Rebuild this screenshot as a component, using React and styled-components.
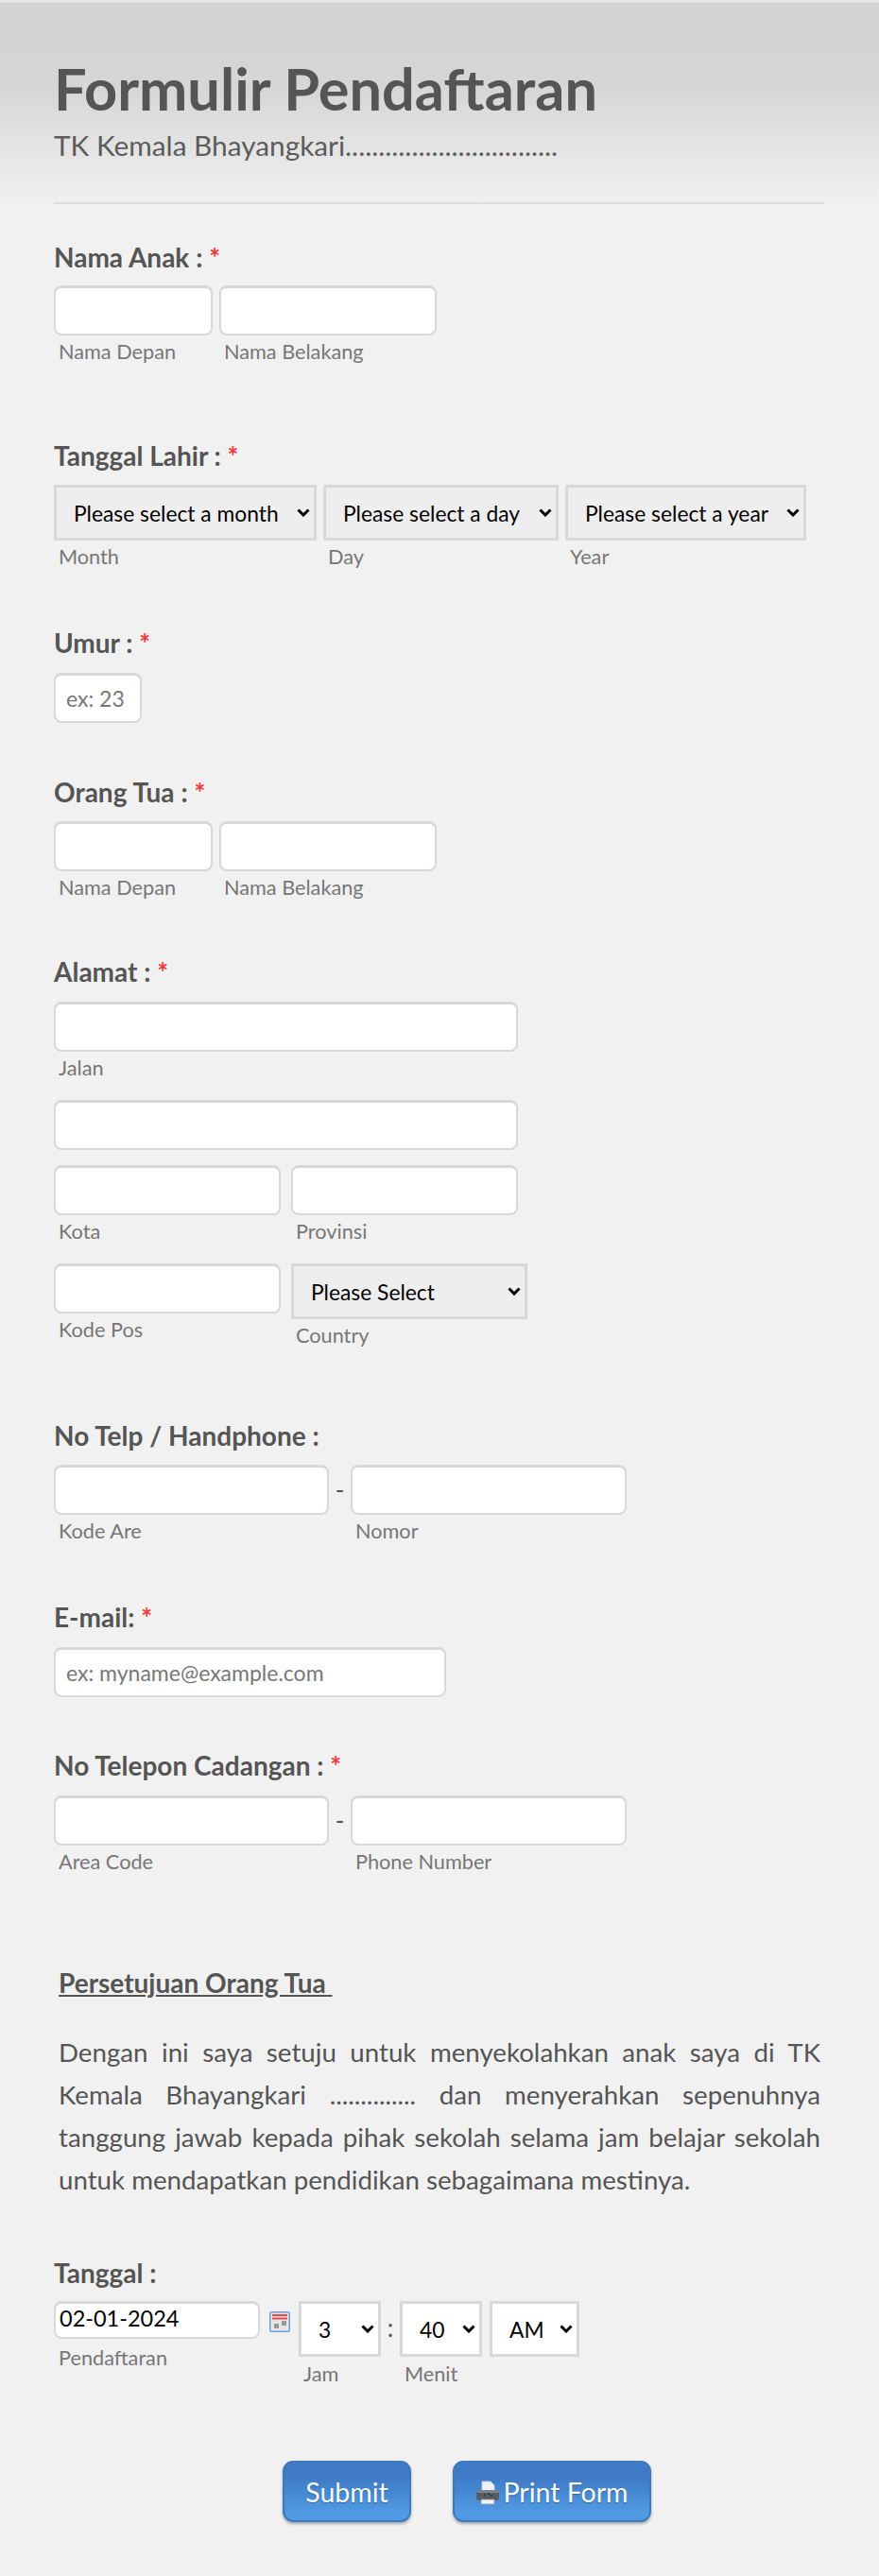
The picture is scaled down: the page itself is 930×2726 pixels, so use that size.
import React from "react";
import styled, { createGlobalStyle } from "styled-components";

const chevron = `url("data:image/svg+xml,%3Csvg xmlns='http://www.w3.org/2000/svg' width='14' height='9' viewBox='0 0 14 9'%3E%3Cpath d='M1.5 1.5 7 7l5.5-5.5' fill='none' stroke='%23000' stroke-width='3'/%3E%3C/svg%3E")`;

const GlobalStyle = createGlobalStyle`
  html, body { margin: 0; padding: 0; background: #f1f1f1; }
  * { box-sizing: border-box; }
`;

const Page = styled.div`
  width: 930px;
  height: 2726px;
  overflow: hidden;
  font-family: Lato, "Liberation Sans", sans-serif;
  color: #555;
  background: linear-gradient(to bottom, #d2d2d2 0, #d6d6d6 90px, #f1f1f1 216px);
  border-top: 3px solid #e4e4e4;
  padding: 0 57px;
`;

const Header = styled.div`
  height: 213px;
  border-bottom: 2px solid #dcdcdc;
  padding-top: 55px;
  margin-right: 1px;
`;

const Title = styled.h1`
  margin: 0;
  font-size: 61.3px;
  line-height: 70px;
  font-weight: 700;
  color: #555;
`;

const Subtitle = styled.div`
  font-size: 29.8px;
  line-height: 38px;
  margin-top: 7px;
  color: #5c5c5c;
`;

const Field = styled.div`
  margin-top: ${(p) => p.$top}px;
`;

const Label = styled.div`
  font-size: 28px;
  line-height: 32px;
  font-weight: 700;
  color: #555;
`;

const Star = styled.span`
  color: #f23a3c;
`;

const Row = styled.div`
  display: flex;
  align-items: flex-start;
  gap: ${(p) => p.$gap ?? 7}px;
  margin-top: ${(p) => p.$top ?? 14}px;
`;

const Col = styled.div`
  width: ${(p) => p.$w}px;
`;

const TextInput = styled.input`
  display: block;
  width: ${(p) => (p.$w ? `${p.$w}px` : "100%")};
  height: ${(p) => p.$h ?? 53}px;
  border: 3px solid #d8d8d8;
  border-width: 3px 2px 2px 2px;
  border-radius: 8px;
  background: #fff;
  outline: none;
  padding: 0 11px;
  font-family: Lato, sans-serif;
  font-size: 23px;
  color: #000;

  &::placeholder {
    color: #777;
    opacity: 1;
  }
`;

const DateInput = styled(TextInput)`
  padding: 0 4px 6px;
  font-size: 23.5px;
`;

const Select = styled.select`
  display: block;
  appearance: none;
  width: ${(p) => p.$w}px;
  height: 59px;
  margin-left: ${(p) => p.$left ?? 0}px;
  border: 3px solid #d8d8d8;
  border-radius: 0;
  background: ${(p) => (p.$white ? "#fff" : "#eeeeee")} ${chevron} no-repeat right 4px center;
  padding: 0 0 0 18px;
  font-family: Lato, sans-serif;
  font-size: 22.8px;
  color: #000;
  outline: none;
`;

const Sub = styled.div`
  font-size: 21.7px;
  line-height: 28px;
  margin-top: ${(p) => p.$top ?? 3}px;
  padding-left: 5px;
  color: #777;
`;

const Dash = styled.div`
  width: 23px;
  height: 53px;
  line-height: 53px;
  text-align: center;
  font-size: 26px;
  color: #555;
`;

const Consent = styled.div`
  margin-top: 97px;
  padding: 0 5px 0 5px;
`;

const ConsentTitle = styled.div`
  font-size: 28px;
  line-height: 34px;
  font-weight: 700;
  text-decoration: underline;
  white-space: pre;
  color: #555;
`;

const Para = styled.p`
  margin: 34px 0 0;
  font-size: 27.7px;
  line-height: 45px;
  text-align: justify;
  color: #555;
`;

const CalIcon = styled.svg`
  width: 22px;
  height: 22px;
  margin: 11px 9px 0 10px;
  flex: none;
`;

const Colon = styled.div`
  width: 20px;
  height: 59px;
  line-height: 56px;
  text-align: center;
  font-size: 26px;
  color: #555;
`;

const Buttons = styled.div`
  display: flex;
  justify-content: center;
  gap: 44px;
  margin-top: 78px;
  padding-left: 58px;
`;

const Button = styled.button`
  display: flex;
  align-items: center;
  justify-content: center;
  gap: 3px;
  width: ${(p) => p.$w}px;
  height: 65px;
  border: 2px solid #3f79bd;
  border-radius: 11px;
  background: linear-gradient(to bottom, #3f7ac6 0, #3f7ac6 25%, #4f9ae2 85%);
  box-shadow: 0 2px 3px rgba(0, 0, 0, 0.3);
  font-family: Lato, sans-serif;
  font-size: 28.5px;
  color: #fff;
  text-shadow: 0 1px 1px rgba(0, 0, 0, 0.3);
  padding: 0;
`;

function Calendar() {
  return (
    <CalIcon viewBox="0 0 22 22">
      <rect x="0.75" y="0.75" width="20.5" height="20.5" rx="1.5" fill="#e6e6e6" stroke="#6f9fd8" strokeWidth="1.5" />
      <rect x="3" y="3" width="16" height="2" fill="#ee4444" />
      <rect x="3" y="6.5" width="16" height="2" fill="#ee4444" />
      <rect x="13" y="10" width="5" height="5" fill="#999" />
      <rect x="5" y="13" width="5" height="5" fill="#999" />
    </CalIcon>
  );
}

function Printer() {
  return (
    <svg width="26" height="28" viewBox="0 0 26 28">
      <path d="M7 3h9l4 4v8H7z" fill="#eef1f5" stroke="#c3ccd6" />
      <rect x="1" y="12" width="24" height="11" rx="3" fill="#555c64" />
      <rect x="1" y="12" width="24" height="3" rx="1.5" fill="#79818a" />
      <rect x="6" y="22" width="14" height="5" fill="#eef1f5" stroke="#8a929b" strokeWidth="0.8" />
      <circle cx="10" cy="17" r="0.8" fill="#111" />
      <circle cx="14" cy="16" r="0.8" fill="#111" />
      <circle cx="17" cy="18" r="0.8" fill="#111" />
    </svg>
  );
}

function NameRow({ left, right, top, wl = 168, wr = 230, gap = 7, dash }) {
  return (
    <Row $gap={gap} $top={top}>
      <Col $w={wl}>
        <TextInput />
        <Sub>{left}</Sub>
      </Col>
      {dash && <Dash>-</Dash>}
      <Col $w={wr}>
        <TextInput />
        <Sub>{right}</Sub>
      </Col>
    </Row>
  );
}

export default function App() {
  return (
    <Page>
      <GlobalStyle />
      <Header>
        <Title>Formulir Pendaftaran</Title>
        <Subtitle>TK Kemala Bhayangkari................................</Subtitle>
      </Header>

      <Field $top={40}>
        <Label>Nama Anak : <Star>*</Star></Label>
        <NameRow left="Nama Depan" right="Nama Belakang" />
      </Field>

      <Field $top={80}>
        <Label>Tanggal Lahir : <Star>*</Star></Label>
        <Row $top={15} $gap={7}>
          <Col $w={278}>
            <Select $w={278}><option>Please select a month</option></Select>
            <Sub>Month</Sub>
          </Col>
          <Col $w={249}>
            <Select $w={249}><option>Please select a day</option></Select>
            <Sub>Day</Sub>
          </Col>
          <Col $w={255}>
            <Select $w={255}><option>Please select a year</option></Select>
            <Sub>Year</Sub>
          </Col>
        </Row>
      </Field>

      <Field $top={61}>
        <Label>Umur : <Star>*</Star></Label>
        <Row $top={16}>
          <TextInput $w={93} placeholder="ex: 23" />
        </Row>
      </Field>

      <Field $top={57}>
        <Label>Orang Tua : <Star>*</Star></Label>
        <NameRow left="Nama Depan" right="Nama Belakang" top={15} />
      </Field>

      <Field $top={59}>
        <Label>Alamat : <Star>*</Star></Label>
        <Row $top={16}>
          <Col $w={491}>
            <TextInput />
            <Sub>Jalan</Sub>
          </Col>
        </Row>
        <Row $top={20}>
          <TextInput $w={491} />
        </Row>
        <Row $top={16} $gap={11}>
          <Col $w={240}>
            <TextInput />
            <Sub>Kota</Sub>
          </Col>
          <Col $w={240}>
            <TextInput />
            <Sub>Provinsi</Sub>
          </Col>
        </Row>
        <Row $top={20} $gap={11}>
          <Col $w={240}>
            <TextInput />
            <Sub>Kode Pos</Sub>
          </Col>
          <Col $w={250}>
            <Select $w={250}><option>Please Select</option></Select>
            <Sub>Country</Sub>
          </Col>
        </Row>
      </Field>

      <Field $top={76}>
        <Label>No Telp / Handphone :</Label>
        <NameRow left="Kode Are" right="Nomor" wl={291} wr={292} gap={0} dash top={15} />
      </Field>

      <Field $top={61}>
        <Label>E-mail: <Star>*</Star></Label>
        <Row $top={16}>
          <TextInput $w={415} placeholder="ex: myname@example.com" />
        </Row>
      </Field>

      <Field $top={56}>
        <Label>No Telepon Cadangan : <Star>*</Star></Label>
        <NameRow left="Area Code" right="Phone Number" wl={291} wr={292} gap={0} dash top={16} />
      </Field>

      <Consent>
        <ConsentTitle>Persetujuan Orang Tua </ConsentTitle>
        <Para>
          Dengan ini saya setuju untuk menyekolahkan anak saya di TK Kemala Bhayangkari .............. dan
          menyerahkan sepenuhnya tanggung jawab kepada pihak sekolah selama jam belajar sekolah untuk
          mendapatkan pendidikan sebagaimana mestinya.
        </Para>
      </Consent>

      <Field $top={60}>
        <Label>Tanggal :</Label>
        <Row $top={14} $gap={0}>
          <Col $w={218}>
            <DateInput $h={40} defaultValue="02-01-2024" />
            <Sub $top={6}>Pendaftaran</Sub>
          </Col>
          <Calendar />
          <Col $w={87}>
            <Select $w={87} $white><option>3</option></Select>
            <Sub $top={4}>Jam</Sub>
          </Col>
          <Colon>:</Colon>
          <Col $w={87}>
            <Select $w={87} $white><option>40</option></Select>
            <Sub $top={4}>Menit</Sub>
          </Col>
          <Col $w={103}>
            <Select $w={95} $white $left={8}><option>AM</option></Select>
          </Col>
        </Row>
      </Field>

      <Buttons>
        <Button $w={136}>Submit</Button>
        <Button $w={210}><Printer />Print Form</Button>
      </Buttons>
    </Page>
  );
}
